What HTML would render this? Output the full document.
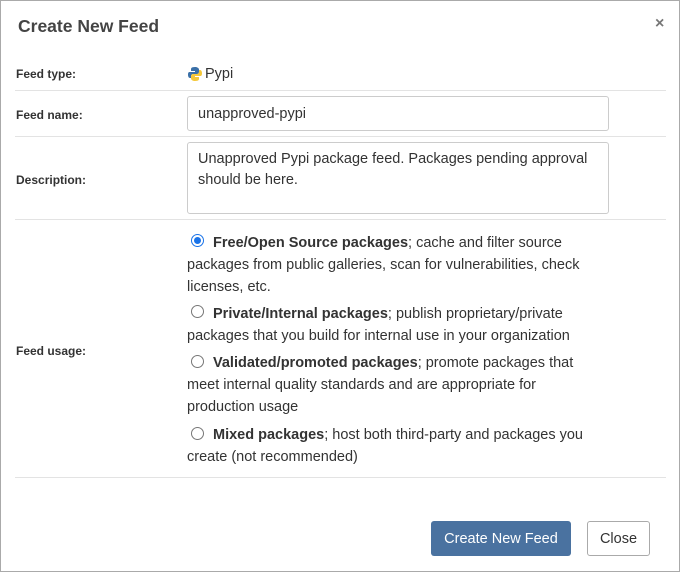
<!DOCTYPE html><html><head><style>
body{margin:0;width:680px;height:572px;background:#fff;font-family:"Liberation Sans",sans-serif;color:#333;position:relative;overflow:hidden}
.frame{position:absolute;left:0;top:0;width:678px;height:570px;border:1px solid #aaa}
.a{position:absolute;white-space:nowrap}
.lbl{font-size:12px;font-weight:bold;left:16px}
.hr{position:absolute;left:15px;width:651px;height:1px;background:#e3e3e3}
.box{position:absolute;border:1px solid #ccc;border-radius:3px;background:#fff;font-size:14.5px;color:#333}
.t{font-size:14.5px;left:187px;line-height:22px}
.rad{position:absolute;width:11px;height:11px;border:1px solid #777;border-radius:50%;left:191px}
</style></head><body><div class="frame"></div>
<div class="a" style="left:18px;top:16px;font-size:17.5px;font-weight:bold;color:#444">Create New Feed</div>
<div class="a" style="left:655px;top:15px;font-size:16px;font-weight:bold;color:#777">×</div>
<div class="a lbl" style="top:67px">Feed type:</div>
<svg class="a" style="left:187px;top:66px" width="16" height="16" viewBox="0 0 16 16"><path d="M8 1C4 1 4 2.5 4 3.5V5h4v1H2.5C1 6 1 8 1 9s.5 3 2 3H4v-2c0-1 1-2 2-2h4c1 0 2-1 2-2V3.5C12 2 10 1 8 1z" fill="#3a70a8"/><path d="M8 15c4 0 4-1.5 4-2.5V11H8v-1h5.5c1.5 0 1.5-2 1.5-3s-.5-3-2-3H12v2c0 1-1 2-2 2H6c-1 0-2 1-2 2v2.5C4 14 6 15 8 15z" fill="#f5c83a"/></svg>
<div class="a" style="left:205px;top:66px;font-size:14.5px">Pypi</div>
<div class="hr" style="top:90px"></div>
<div class="a lbl" style="top:108px">Feed name:</div>
<div class="box" style="left:187px;top:96px;width:420px;height:33px"><span style="position:absolute;left:10px;top:9px">unapproved-pypi</span></div>
<div class="hr" style="top:136px"></div>
<div class="a lbl" style="top:173px">Description:</div>
<div class="box" style="left:187px;top:142px;width:420px;height:70px"><div style="position:absolute;left:10px;top:6px;line-height:21px;width:400px;white-space:normal">Unapproved Pypi package feed. Packages pending approval should be here.</div></div>
<div class="hr" style="top:219px"></div>
<div class="a lbl" style="top:344px">Feed usage:</div>
<div class="rad" style="top:234px;border-color:#1a73e8"><div style="position:absolute;left:2px;top:2px;width:7px;height:7px;border-radius:50%;background:#1a73e8"></div></div>
<div class="a t" style="top:232px"><span style="padding-left:26px"><b>Free/Open Source packages</b>; cache and filter source</span><br>packages from public galleries, scan for vulnerabilities, check<br>licenses, etc.</div>
<div class="rad" style="top:305px"></div>
<div class="a t" style="top:303px"><span style="padding-left:26px"><b>Private/Internal packages</b>; publish proprietary/private</span><br>packages that you build for internal use in your organization</div>
<div class="rad" style="top:355px"></div>
<div class="a t" style="top:352px"><span style="padding-left:26px"><b>Validated/promoted packages</b>; promote packages that</span><br>meet internal quality standards and are appropriate for<br>production usage</div>
<div class="rad" style="top:427px"></div>
<div class="a t" style="top:424px"><span style="padding-left:26px"><b>Mixed packages</b>; host both third-party and packages you</span><br>create (not recommended)</div>
<div class="hr" style="top:477px"></div>
<div class="a" style="left:431px;top:521px;width:140px;height:35px;background:#4a72a0;border-radius:3px;color:#fff;font-size:14.5px;text-align:center;line-height:37px">Create New Feed</div>
<div class="a" style="left:587px;top:521px;width:61px;height:33px;border:1px solid #aaa;border-radius:3px;color:#333;font-size:14.5px;text-align:center;line-height:35px">Close</div>
</body></html>
